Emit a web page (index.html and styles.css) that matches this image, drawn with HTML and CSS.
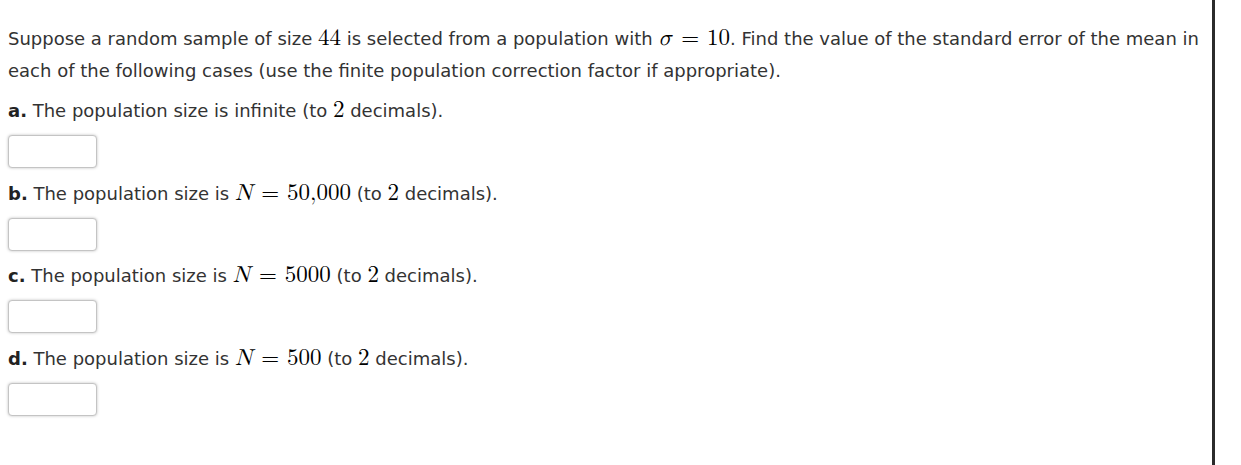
FILE: index.html
```html
<!DOCTYPE html>
<html>
<head>
<meta charset="utf-8">
<link rel="stylesheet" href="styles.css">
</head>
<body>
<div class="page">
  <div class="question">
    <p class="intro">Suppose a random sample of size <span class="m">44</span> is selected from a population with <span class="m"><i>σ</i><span class="eq">=</span>10</span>. Find the value of the standard error of the mean in each of the following cases (use the finite population correction factor if appropriate).</p>

    <div class="part">
      <p class="prompt"><b>a.</b> The population size is infinite (to <span class="m">2</span> decimals).</p>
      <div class="answer"></div>
    </div>

    <div class="part">
      <p class="prompt"><b>b.</b> The population size is <span class="m"><i>N</i><span class="eq">=</span>50,000</span> (to <span class="m">2</span> decimals).</p>
      <div class="answer"></div>
    </div>

    <div class="part">
      <p class="prompt"><b>c.</b> The population size is <span class="m"><i>N</i><span class="eq">=</span>5000</span> (to <span class="m">2</span> decimals).</p>
      <div class="answer"></div>
    </div>

    <div class="part">
      <p class="prompt"><b>d.</b> The population size is <span class="m"><i>N</i><span class="eq">=</span>500</span> (to <span class="m">2</span> decimals).</p>
      <div class="answer"></div>
    </div>
  </div>
  <div class="rule"></div>
</div>
</body>
</html>
```

FILE: styles.css
```css
html, body {
  margin: 0;
  padding: 0;
  background: #fff;
}
body {
  font-family: Verdana, "DejaVu Sans", sans-serif;
  font-size: 18px;
  color: #333;
}
.page {
  display: flex;
  height: 465px;
}
.question {
  width: 1204px;
  padding: 23px 0 0 8px;
}
.rule {
  width: 3px;
  background: #2b2b2b;
  height: 100%;
}
p {
  margin: 0;
}
.intro {
  line-height: 32px;
  margin-bottom: 12px;
}
.part {
  display: flex;
  flex-direction: column;
  align-items: flex-start;
  margin-bottom: 13.67px;
}
.prompt {
  line-height: 24px;
}
.prompt b {
  color: #222;
}
.m {
  font-family: "Latin Modern Math", "DejaVu Serif", "Liberation Serif", serif;
  font-size: 23px;
  line-height: 0;
  color: #000;
  white-space: nowrap;
}
.m i {
  font-style: italic;
  padding-right: 1px;
}
.eq {
  padding: 0 8px;
}
.answer {
  margin-top: 12px;
  width: 87px;
  height: 31px;
  border: 1px solid #c4c4c4;
  border-radius: 4px;
  box-shadow: 0 0 3px rgba(0,0,0,0.25);
  background: #fff;
}
```
